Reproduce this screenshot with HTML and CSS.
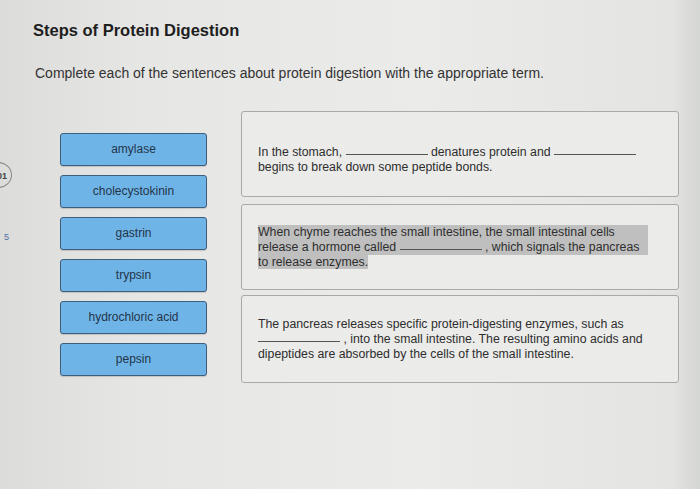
FILE: index.html
```html
<!DOCTYPE html>
<html lang="en">
<head>
    <meta charset="UTF-8">
    <meta name="viewport" content="width=device-width, initial-scale=1.0">
    <title>Steps of Protein Digestion</title>
    <link rel="stylesheet" href="styles.css">
</head>
<body>
    <!-- bit of the next window peeking in on the left -->
    <div class="peek">01</div>
    <div class="peek-num">5</div>

    <div class="page">
        <h1>Steps of Protein Digestion</h1>
        <p class="intro">Complete each of the sentences about protein digestion with the appropriate term.</p>

        <div class="workspace">
            <!-- answer tiles -->
            <div class="tiles">
                <div class="tile">amylase</div>
                <div class="tile">cholecystokinin</div>
                <div class="tile">gastrin</div>
                <div class="tile">trypsin</div>
                <div class="tile">hydrochloric acid</div>
                <div class="tile">pepsin</div>
            </div>

            <!-- sentences with blanks -->
            <div class="sentences">
                <div class="sentence first">
                    <p>In the stomach, <span class="blank"></span> denatures protein and <span class="blank"></span> begins to break down some peptide bonds.</p>
                </div>
                <div class="sentence">
                    <p class="selected-block">When chyme reaches the small intestine, the small intestinal cells release a hormone called <span class="blank"></span> , which signals the pancreas <span class="selected">to release enzymes.</span></p>
                </div>
                <div class="sentence last">
                    <p>The pancreas releases specific protein-digesting enzymes, such as <span class="blank"></span> , into the small intestine. The resulting amino acids and dipeptides are absorbed by the cells of the small intestine.</p>
                </div>
            </div>
        </div>
    </div>
</body>
</html>
```

FILE: styles.css
```css
body {
    margin: 0;
    font-family: "Liberation Sans", Arial, sans-serif;
    color: #2b2b2b;
    background: linear-gradient(90deg, #dcdcda 0%, #e6e6e4 20%, #ebebea 60%, #e4e4e2 96%, #d4d6d4 100%);
    min-height: 489px;
    overflow: hidden;
}
.page {
    padding: 20px 20px 0 33px;
}
h1 {
    margin: 0;
    font-size: 16.5px;
    line-height: 20px;
    font-weight: bold;
    color: #1e1e1e;
}
.intro {
    margin: 24px 0 0 2px;
    font-size: 14px;
    line-height: 18px;
    color: #333;
}
.workspace {
    display: flex;
    align-items: flex-start;
    margin-top: 29px;
    padding-left: 27px;
}
.tiles {
    display: flex;
    flex-direction: column;
    gap: 9px;
    width: 147px;
    margin-top: 22px;
}
.tile {
    height: 31px;
    line-height: 31px;
    background: #6fb4e6;
    border: 1px solid #3f5d7c;
    border-radius: 3px;
    font-size: 12px;
    text-align: center;
    color: #23354a;
    box-shadow: 0 1px 1px rgba(0, 0, 0, 0.15);
}
.sentences {
    display: flex;
    flex-direction: column;
    gap: 7px;
    width: 438px;
    margin-left: 34px;
}
.sentence {
    height: 84px;
    display: flex;
    align-items: center;
    padding: 0 30px 0 16px;
    border: 1px solid #a9a9a9;
    border-radius: 3px;
    background: #ebebea;
}
.sentence.first {
    padding-top: 12px;
    height: 72px;
}
.sentence.last {
    margin-top: -2px;
    height: 86px;
}
.sentence p {
    margin: 0;
    font-size: 12.3px;
    line-height: 15px;
    color: #2e2e2e;
}
.blank {
    display: inline-block;
    width: 82px;
    border-bottom: 1px solid #555;
    vertical-align: 1px;
}
/* text selection: first two lines run full width, last line stops at the text */
.sentence p.selected-block {
    background: linear-gradient(#bfbfbf, #bfbfbf) 0 0 / 100% 30px no-repeat;
}
.selected {
    background: #bfbfbf;
}
.peek {
    position: absolute;
    left: -16px;
    top: 162px;
    width: 28px;
    height: 26px;
    border: 1px solid #888;
    border-radius: 50%;
    font-size: 9px;
    line-height: 26px;
    text-align: right;
    padding-right: 4px;
    box-sizing: border-box;
    font-weight: bold;
    color: #444;
}
.peek-num {
    position: absolute;
    left: 4px;
    top: 232px;
    font-size: 9px;
    color: #5070a0;
}
```
